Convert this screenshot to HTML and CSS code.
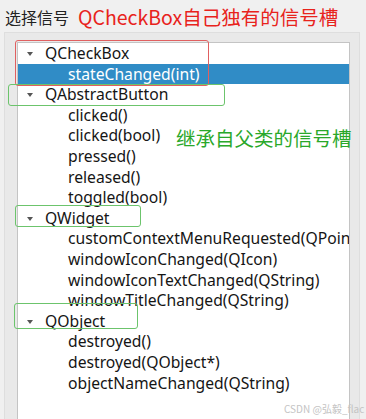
FILE: index.html
```html
<!DOCTYPE html>
<html lang="zh-CN">
<head>
    <title>选择信号</title>
    <link rel="stylesheet" href="styles.css">
</head>
<body>
    <div class="header">
        <span class="title">选择信号</span>
        <span class="note-red">QCheckBox自己独有的信号槽</span>
    </div>

    <div class="panel">
        <div class="tree">
            <!-- QCheckBox -->
            <div class="row parent"><span class="arrow"></span>QCheckBox</div>
            <div class="row child selected">stateChanged(int)</div>

            <!-- QAbstractButton -->
            <div class="row parent"><span class="arrow"></span>QAbstractButton</div>
            <div class="row child">clicked()</div>
            <div class="row child">clicked(bool)</div>
            <div class="row child">pressed()</div>
            <div class="row child">released()</div>
            <div class="row child">toggled(bool)</div>

            <!-- QWidget -->
            <div class="row parent"><span class="arrow"></span>QWidget</div>
            <div class="row child">customContextMenuRequested(QPoint)</div>
            <div class="row child">windowIconChanged(QIcon)</div>
            <div class="row child">windowIconTextChanged(QString)</div>
            <div class="row child">windowTitleChanged(QString)</div>

            <!-- QObject -->
            <div class="row parent"><span class="arrow"></span>QObject</div>
            <div class="row child">destroyed()</div>
            <div class="row child">destroyed(QObject*)</div>
            <div class="row child">objectNameChanged(QString)</div>
        </div>
    </div>

    <!-- annotation boxes drawn over the tree -->
    <div class="box box-red"></div>
    <div class="box box-green box-abstract"></div>
    <div class="box box-green box-widget"></div>
    <div class="box box-green box-object"></div>
    <div class="note-green">继承自父类的信号槽</div>

    <div class="watermark">CSDN @弘毅_flac</div>
</body>
</html>
```

FILE: styles.css
```css
body {
    margin: 0;
    background-color: #f0f0f0;
    font-family: "Noto Sans", "Noto Sans CJK SC", sans-serif;
    width: 366px;
    height: 419px;
    overflow: hidden;
    position: relative;
}

.header {
    height: 32px;
    display: flex;
    align-items: center;
    padding-left: 5px;
}

.title {
    font-family: "Noto Sans CJK SC", sans-serif;
    font-size: 16px;
    color: #222;
    margin-top: 2px;
}

.note-red {
    font-family: "Noto Sans CJK SC", sans-serif;
    font-size: 19.5px;
    color: #e8231c;
    margin-left: 9px;
    margin-top: 1px;
}

.panel {
    margin-left: 4px;
    width: 356px;
    height: 387px;
    background-color: #e9e9e9;
    border: 1px solid #dedede;
    border-bottom: none;
    box-sizing: border-box;
    padding: 9px 0 0 12px;
}

.tree {
    width: 333px;
    height: 378px;
    background-color: #fff;
    border: 1px solid #c4c4c4;
    border-bottom: none;
    box-sizing: border-box;
}

.row {
    height: 20.6px;
    line-height: 20.6px;
    font-size: 15.7px;
    color: #151515;
    white-space: nowrap;
    overflow: hidden;
}

.parent {
    padding-left: 9px;
    display: flex;
    align-items: center;
}

.child {
    padding-left: 50px;
}

.selected {
    background-color: #308cc6;
    color: #fff;
}

.arrow {
    width: 0;
    height: 0;
    border-left: 3.5px solid transparent;
    border-right: 3.5px solid transparent;
    border-top: 4px solid #555;
    margin-right: 12px;
    margin-top: 1px;
}

.box {
    position: absolute;
    border-radius: 3px;
    box-sizing: border-box;
}

.box-red {
    left: 15px;
    top: 40px;
    width: 194px;
    height: 46px;
    border: 1.5px solid #e06060;
}

.box-green {
    border: 1.5px solid #6cc46c;
}

.box-abstract {
    left: 8px;
    top: 84px;
    width: 217px;
    height: 22px;
}

.box-widget {
    left: 15px;
    top: 205px;
    width: 126px;
    height: 22px;
}

.box-object {
    left: 14px;
    top: 303px;
    width: 124px;
    height: 26px;
}

.note-green {
    position: absolute;
    left: 176px;
    top: 123px;
    font-family: "Noto Sans CJK SC", sans-serif;
    font-size: 19.5px;
    color: #2aa82a;
}

.watermark {
    position: absolute;
    left: 284px;
    top: 401px;
    font-family: "Noto Sans CJK SC", sans-serif;
    font-size: 10px;
    color: #c4c4c4;
}
```
